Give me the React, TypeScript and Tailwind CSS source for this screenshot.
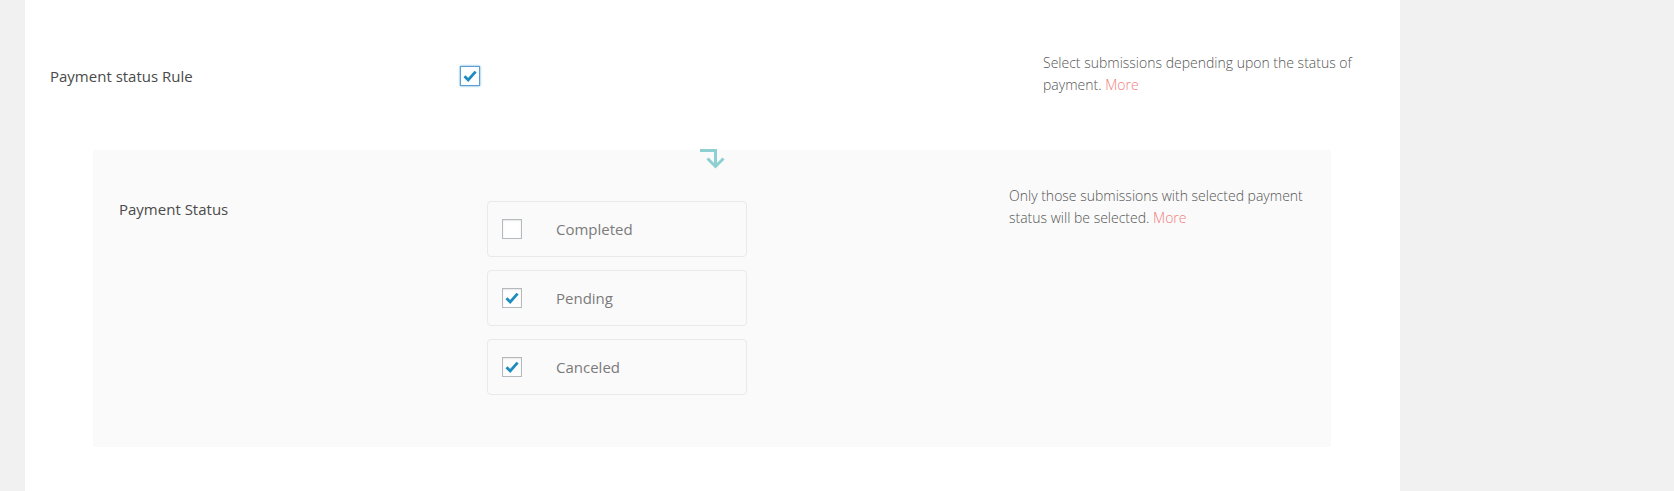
import React from "react";

const Check = () => (
  <svg width="16" height="16" viewBox="0 0 16 16" className="block">
    <path d="M2.5 8.2 L6.2 12 L13.6 3.6" fill="none" stroke="#1e8cbe" strokeWidth="2.8" strokeLinecap="butt" strokeLinejoin="miter" />
  </svg>
);

const Box = ({ checked, focus }: { checked?: boolean; focus?: boolean }) => (
  <div
    className={
      focus
        ? "w-[20px] h-[20px] bg-white border border-[#5b9dd9] shadow-[0_0_2px_rgba(30,140,190,0.8)] flex items-center justify-center"
        : "w-[20px] h-[20px] bg-white border border-[#b4b9be] shadow-[inset_0_1px_2px_rgba(0,0,0,0.1)] flex items-center justify-center"
    }
  >
    {checked ? <Check /> : null}
  </div>
);

const Option = ({ label, checked }: { label: string; checked?: boolean }) => (
  <div className="h-[56px] w-[260px] border border-[#e9e9e9] rounded-[4px] flex items-center pl-[14px]">
    <Box checked={checked} />
    <span className="ml-[34px] text-[15px] text-[#7a7a7a]">{label}</span>
  </div>
);

export default function App() {
  return (
    <div
      className="flex h-[491px] w-[1674px] bg-[#f1f1f1]"
      style={{ fontFamily: '"Open Sans", "Noto Sans", sans-serif' }}
    >
      <div className="ml-[25px] w-[1375px] h-full bg-white">
        <div className="flex items-start pl-[25px] pt-[52px]">
          <div className="w-[410px] pt-[13px] text-[15px] leading-[22px] text-[#4a4a4a]">Payment status Rule</div>
          <div className="w-[583px] pt-[14px]">
            <Box checked focus />
          </div>
          <div className="w-[320px] text-[14px] leading-[22px] font-light text-[#555]">
            <p>
              Select submissions depending upon the status of payment.{" "}
              <a className="text-[#f08080]">More</a>
            </p>
          </div>
        </div>
        <div className="relative mt-[54px] ml-[68px] w-[1238px] h-[297px] bg-[#fafafa] flex items-start pl-[26px]">
          <svg className="absolute left-[607px] top-[-1px]" width="26" height="20" viewBox="0 0 26 20">
            <path d="M0 1.5 H15.5 V17" fill="none" stroke="#8ecfd1" strokeWidth="3" />
            <path d="M7.5 9.5 L15.5 17.5 L23.5 9.5" fill="none" stroke="#8ecfd1" strokeWidth="3" />
          </svg>
          <div className="w-[368px] pt-[48px] text-[15px] leading-[22px] text-[#4a4a4a]">Payment Status</div>
          <div className="w-[260px] pt-[51px] flex flex-col gap-[13px]">
            <Option label="Completed" />
            <Option label="Pending" checked />
            <Option label="Canceled" checked />
          </div>
          <div className="ml-[262px] w-[300px] pt-[35px] text-[14px] leading-[22px] font-light text-[#555]">
            <p>
              Only those submissions with selected payment status will be selected.{" "}
              <a className="text-[#f08080]">More</a>
            </p>
          </div>
        </div>
      </div>
    </div>
  );
}
